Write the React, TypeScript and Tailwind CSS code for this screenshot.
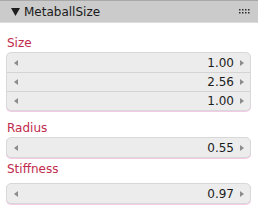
import React from "react";

const font = { fontFamily: '"DejaVu Sans", "Liberation Sans", sans-serif' };

function ArrowLeft() {
  return (
    <svg width="4" height="6" viewBox="0 0 4 6" className="shrink-0">
      <path d="M4 0 L0 3 L4 6 Z" fill="#8c8c8c" />
    </svg>
  );
}

function ArrowRight() {
  return (
    <svg width="4" height="6" viewBox="0 0 4 6" className="shrink-0">
      <path d="M0 0 L4 3 L0 6 Z" fill="#8c8c8c" />
    </svg>
  );
}

function GripDots() {
  const xs = [0, 3, 6, 9];
  const ys = [0, 3];
  return (
    <svg width="11" height="5" viewBox="0 0 11 5">
      {ys.map((y) =>
        xs.map((x) => <rect key={`${x}-${y}`} x={x} y={y} width="1.5" height="1.5" fill="#2e2e2e" />)
      )}
    </svg>
  );
}

function Row({ value, divider }: { value: string; divider?: boolean }) {
  return (
    <div
      className={`h-[19px] flex items-center pl-[7px] pr-[6px] ${
        divider ? "border-t border-[#d4d4d4]" : ""
      }`}
    >
      <ArrowLeft />
      <span className="ml-auto mr-[6px] text-[12px] text-[#1c1c1c]">{value}</span>
      <ArrowRight />
    </div>
  );
}

function Field({ values }: { values: string[] }) {
  return (
    <div className="rounded-[5px] border border-[#d8d8d8] bg-[#ececec] shadow-[0_1px_0_#f3cbe6] overflow-hidden">
      {values.map((v, i) => (
        <Row key={i} value={v} divider={i > 0} />
      ))}
    </div>
  );
}

function Label({ text }: { text: string }) {
  return <div className="h-[16px] leading-[16px] text-[12px] text-[#c02a4c] pl-[1px]">{text}</div>;
}

export default function App() {
  return (
    <div className="w-[258px] h-[205px] bg-white overflow-hidden" style={font}>
      {/* Panel header */}
      <div className="h-[23px] bg-[#cbcbcb] border-t border-[#a9a9a9] border-b border-b-[#dcdcdc] flex items-center pl-[11px] pr-[8px]">
        <svg width="9" height="8" viewBox="0 0 9 8" className="mr-[4px]">
          <path d="M0 0 L9 0 L4.5 8 Z" fill="#1e1e1e" />
        </svg>
        <span className="text-[12px] text-[#1a1a1a]">MetaballSize</span>
        <span className="ml-auto">
          <GripDots />
        </span>
      </div>

      <div className="pl-[6px] pr-[7px] pt-[12px]">
        <Label text="Size" />
        <div className="mt-[1px]">
          <Field values={["1.00", "2.56", "1.00"]} />
        </div>

        <div className="mt-[9px]">
          <Label text="Radius" />
        </div>
        <div className="mt-[1px]">
          <Field values={["0.55"]} />
        </div>

        <div className="mt-[3px]">
          <Label text="Stiffness" />
        </div>
        <div className="mt-[6px]">
          <Field values={["0.97"]} />
        </div>
      </div>
    </div>
  );
}
